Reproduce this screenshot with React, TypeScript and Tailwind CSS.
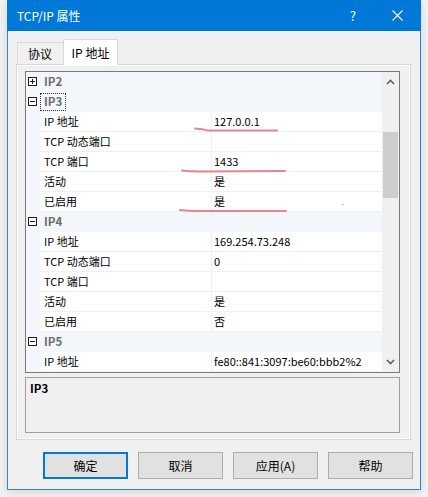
import React from "react";

type Row =
  | { kind: "cat"; label: string; collapsed?: boolean; focus?: boolean }
  | { kind: "prop"; name: string; value: string };

const rows: Row[] = [
  { kind: "cat", label: "IP2", collapsed: true },
  { kind: "cat", label: "IP3", focus: true },
  { kind: "prop", name: "IP 地址", value: "127.0.0.1" },
  { kind: "prop", name: "TCP 动态端口", value: "" },
  { kind: "prop", name: "TCP 端口", value: "1433" },
  { kind: "prop", name: "活动", value: "是" },
  { kind: "prop", name: "已启用", value: "是" },
  { kind: "cat", label: "IP4" },
  { kind: "prop", name: "IP 地址", value: "169.254.73.248" },
  { kind: "prop", name: "TCP 动态端口", value: "0" },
  { kind: "prop", name: "TCP 端口", value: "" },
  { kind: "prop", name: "活动", value: "是" },
  { kind: "prop", name: "已启用", value: "否" },
  { kind: "cat", label: "IP5" },
  { kind: "prop", name: "IP 地址", value: "fe80::841:3097:be60:bbb2%2" },
];

function ExpandBox({ collapsed }: { collapsed?: boolean }) {
  return (
    <svg width="9" height="9" viewBox="0 0 9 9" className="block">
      <rect x="0.5" y="0.5" width="8" height="8" fill="#fff" stroke="#1e1e1e" />
      <line x1="2" y1="4.5" x2="7" y2="4.5" stroke="#1e1e1e" />
      {collapsed && <line x1="4.5" y1="2" x2="4.5" y2="7" stroke="#1e1e1e" />}
    </svg>
  );
}

function GridRow({ row }: { row: Row }) {
  if (row.kind === "cat") {
    return (
      <div className="flex h-[20px] bg-[#f3f6fb]">
        <div className="w-[14px] shrink-0 pl-[2px] pt-[5px]">
          <ExpandBox collapsed={row.collapsed} />
        </div>
        <div className="flex items-center">
          <span
            className={
              "h-[18px] flex items-center px-[3px] text-[11.5px] font-bold text-[#6d6d6d] " +
              (row.focus ? "border border-dotted border-[#333]" : "border border-transparent")
            }
          >
            {row.label}
          </span>
        </div>
      </div>
    );
  }
  return (
    <div className="flex h-[20px]">
      <div className="w-[14px] shrink-0 bg-[#f3f6fb]" />
      <div className="w-[171px] shrink-0 bg-white border-b border-[#f0f0f0] flex items-center pl-[4px] text-[11px] whitespace-nowrap">
        {row.name}
      </div>
      <div className="flex-1 bg-white border-b border-l border-[#f0f0f0] flex items-center pl-[2px] text-[11px] whitespace-nowrap overflow-hidden">
        {row.value}
      </div>
    </div>
  );
}

function Chevron({ up }: { up?: boolean }) {
  return (
    <svg width="9" height="6" viewBox="0 0 9 6" className="block">
      <polyline
        points={up ? "1,5 4.5,1.5 8,5" : "1,1 4.5,4.5 8,1"}
        fill="none"
        stroke="#606060"
        strokeWidth="1.6"
      />
    </svg>
  );
}

function Button({ label, primary }: { label: string; primary?: boolean }) {
  return (
    <div
      className={
        "w-[85px] h-[27px] flex items-center justify-center text-[12px] bg-[#e1e1e1] " +
        (primary ? "border-2 border-[#0078d7]" : "border border-[#adadad]")
      }
    >
      {label}
    </div>
  );
}

export default function App() {
  return (
    <div className="relative w-[428px] h-[497px] overflow-hidden bg-[#f4f4f4] text-black font-['Noto_Sans_CJK_SC','Noto_Sans',sans-serif]">
      <div className="ml-[7px] w-[414px] h-[490px] flex flex-col shadow-[0_2px_10px_rgba(0,0,0,0.15)]">
        {/* title bar */}
        <div className="h-[31px] bg-[#0078d7] flex items-center text-white text-[12px] shrink-0">
          <span className="pl-[10px]">TCP/IP 属性</span>
          <span className="ml-auto mr-[36px] text-[13px]">?</span>
          <svg width="11" height="11" viewBox="0 0 11 11" className="mr-[18px]">
            <line x1="0.5" y1="0.5" x2="10.5" y2="10.5" stroke="#fff" strokeWidth="1.1" />
            <line x1="10.5" y1="0.5" x2="0.5" y2="10.5" stroke="#fff" strokeWidth="1.1" />
          </svg>
        </div>
        {/* body */}
        <div className="flex-1 flex flex-col bg-[#f0f0f0] border-x border-b border-[#2b88d8]">
          {/* tabs */}
          <div className="mt-[8px] h-[25px] pl-[9px] flex items-end shrink-0">
            <div className="w-[46px] h-[22px] border-t border-l border-[#d9d9d9] bg-[#f0f0f0] flex items-center justify-center text-[12px] pr-[1px]">
              协议
            </div>
            <div className="relative z-10 -mb-px w-[55px] h-[26px] border-t border-x border-[#d9d9d9] bg-white flex items-center justify-center text-[12px]">
              IP 地址
            </div>
          </div>
          {/* panel */}
          <div className="ml-[8px] w-[395px] h-[376px] border border-[#d9d9d9] bg-[#f0f0f0] shadow-[inset_0_0_0_1px_#ffffff] pl-[8px] pt-[6px] shrink-0">
            {/* property grid */}
            <div className="w-[375px] h-[302px] border border-[#7a7a7a] flex bg-white">
              <div className="flex-1 flex flex-col overflow-hidden">
                {rows.map((r, i) => (
                  <GridRow key={i} row={r} />
                ))}
              </div>
              <div className="w-[17px] shrink-0 bg-[#f0f0f0] flex flex-col">
                <div className="h-[17px] flex items-center justify-center pt-[3px]">
                  <Chevron up />
                </div>
                <div className="flex-1 pt-[43px]">
                  <div className="mx-[1px] h-[66px] bg-[#cdcdcd]" />
                </div>
                <div className="h-[17px] flex items-center justify-center pb-[3px]">
                  <Chevron />
                </div>
              </div>
            </div>
            {/* description */}
            <div className="mt-[4px] w-[375px] h-[56px] border border-[#a0a0a0] bg-[#f0f0f0] pl-[4px] pt-[2px]">
              <div className="text-[11.5px] font-bold leading-[16px]">IP3</div>
            </div>
          </div>
          {/* buttons */}
          <div className="mt-[12px] flex justify-end gap-[10px] pr-[7px]">
            <Button label="确定" primary />
            <Button label="取消" />
            <Button label="应用(A)" />
            <Button label="帮助" />
          </div>
        </div>
      </div>
      {/* hand-drawn annotations */}
      <svg className="absolute inset-0 pointer-events-none" width="428" height="497" viewBox="0 0 428 497">
        <path d="M195 128.5 Q203 129 208 130.5 L277 130.5" fill="none" stroke="#e8848f" strokeWidth="1.8" strokeLinecap="round" />
        <path d="M182 170.5 Q190 171.5 200 171.5 L285 171" fill="none" stroke="#e8848f" strokeWidth="1.8" strokeLinecap="round" />
        <path d="M180 210 Q188 211 196 211 L286 211" fill="none" stroke="#e8848f" strokeWidth="1.8" strokeLinecap="round" />
        <rect x="342" y="204" width="2" height="1" fill="#c8c8c8" />
      </svg>
    </div>
  );
}
